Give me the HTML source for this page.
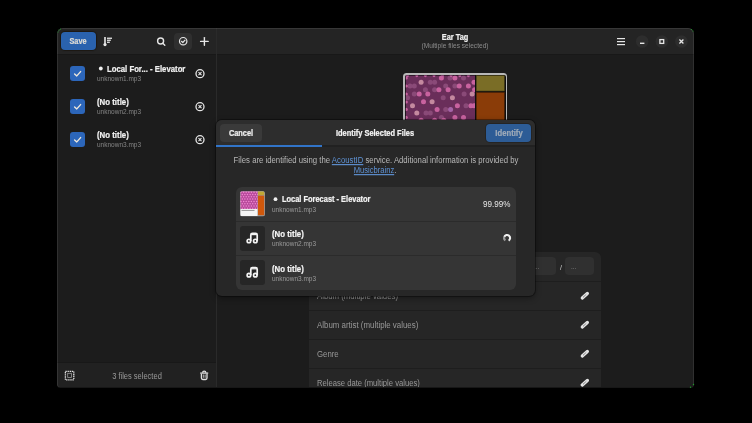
<!DOCTYPE html>
<html><head><meta charset="utf-8">
<style>
*{box-sizing:border-box;margin:0;padding:0}
html,body{width:752px;height:423px;overflow:hidden;background:#000;font-family:"Liberation Sans",sans-serif;color:#fff;position:relative}
.a{position:absolute}
.t{position:absolute;white-space:nowrap;line-height:1;will-change:transform}
.b{font-weight:bold;-webkit-text-stroke:0.2px currentColor}
svg{overflow:visible}
</style></head><body>
<div class="a" style="left:57px;top:28px;width:637px;height:359px;background:#1c1c1c;border-radius:6px 6px 3px 3px;overflow:hidden"><div class="a" style="left:0;top:0;width:637px;height:25.6px;background:#242424"></div><div class="a" style="left:0;top:25.6px;width:637px;height:1px;background:#181818"></div><div class="a" style="left:0;top:334.8px;width:159px;height:25px;background:#212121"></div><div class="a" style="left:0;top:333.8px;width:159px;height:1px;background:#181818"></div><div class="a" style="left:159px;top:0;width:1px;height:359px;background:#2a2a2a"></div></div>
<div class="a" style="left:60.5px;top:32.2px;width:35px;height:18px;background:#2a62ae;border-radius:4px;box-shadow:0 0 1px 1px rgba(20,12,0,0.5)"></div>
<div class="t b" style="left:77.8px;top:38.12px;font-size:7.3px;color:#dedcd6;transform:translateX(-50%) scaleY(1.15);transform-origin:50% 6.18px;">Save</div>
<svg class="a" style="left:0;top:0" width="752" height="423">
<g fill="#e6e6e6">
 <rect x="104.2" y="37" width="1.6" height="7.5"/>
 <circle cx="105" cy="44.6" r="1.6"/>
 <rect x="107" y="37.6" width="5" height="1.3"/>
 <rect x="107" y="39.6" width="3.8" height="1.3"/>
 <rect x="107" y="41.6" width="2.8" height="1.3"/>
</g>
<g stroke="#e6e6e6" stroke-width="1.4" fill="none" stroke-linecap="round">
 <circle cx="160.6" cy="41" r="3"/>
 <line x1="162.8" y1="43.2" x2="164.8" y2="45.2"/>
</g>
</svg>
<div class="a" style="left:174.2px;top:32.6px;width:17.4px;height:17.4px;background:#2f2f2f;border-radius:4px;"></div>
<svg class="a" style="left:0;top:0" width="752" height="423">
<g stroke="#e6e6e6" stroke-width="1.2" fill="none" stroke-linecap="round" stroke-linejoin="round">
 <circle cx="183.2" cy="41.2" r="3.7"/>
 <polyline points="181.5,41.3 182.8,42.5 185,40.2"/>
 <line x1="204.4" y1="37.6" x2="204.4" y2="45.2" stroke-width="1.4"/>
 <line x1="200.6" y1="41.4" x2="208.2" y2="41.4" stroke-width="1.4"/>
</g>
</svg>
<div class="a" style="left:70px;top:65.9px;width:15px;height:15px;background:#2c66ba;border-radius:3px;"></div>
<svg class="a" style="left:0;top:0" width="752" height="423"><polyline points="74.6,73.9 76.8,75.9 80.6,71.6" stroke="#eee8dc" stroke-width="1.4" fill="none" stroke-linecap="round" stroke-linejoin="round"/><circle cx="200" cy="73.7" r="4" stroke="#e6e6e6" stroke-width="1.3" fill="none"/><path d="M198.5 72.2 L201.5 75.2 M201.5 72.2 L198.5 75.2" stroke="#e6e6e6" stroke-width="1.1"/></svg>
<div class="t b" style="left:106.6px;top:65.84px;font-size:7.75px;color:#f0f0f0;transform:scaleY(1.15);transform-origin:50% 6.56px;">Local For... - Elevator</div>
<div class="t" style="left:96.7px;top:76.30px;font-size:6.5px;color:#858585;transform:scaleY(1.15);transform-origin:50% 5.50px;">unknown1.mp3</div>
<div class="a" style="left:70px;top:98.9px;width:15px;height:15px;background:#2c66ba;border-radius:3px;"></div>
<svg class="a" style="left:0;top:0" width="752" height="423"><polyline points="74.6,106.9 76.8,108.9 80.6,104.6" stroke="#eee8dc" stroke-width="1.4" fill="none" stroke-linecap="round" stroke-linejoin="round"/><circle cx="200" cy="106.7" r="4" stroke="#e6e6e6" stroke-width="1.3" fill="none"/><path d="M198.5 105.2 L201.5 108.2 M201.5 105.2 L198.5 108.2" stroke="#e6e6e6" stroke-width="1.1"/></svg>
<div class="t b" style="left:96.7px;top:98.85px;font-size:7.85px;color:#f0f0f0;transform:scaleY(1.15);transform-origin:50% 6.65px;">(No title)</div>
<div class="t" style="left:96.7px;top:109.30px;font-size:6.5px;color:#858585;transform:scaleY(1.15);transform-origin:50% 5.50px;">unknown2.mp3</div>
<div class="a" style="left:70px;top:131.9px;width:15px;height:15px;background:#2c66ba;border-radius:3px;"></div>
<svg class="a" style="left:0;top:0" width="752" height="423"><polyline points="74.6,139.9 76.8,141.9 80.6,137.6" stroke="#eee8dc" stroke-width="1.4" fill="none" stroke-linecap="round" stroke-linejoin="round"/><circle cx="200" cy="139.7" r="4" stroke="#e6e6e6" stroke-width="1.3" fill="none"/><path d="M198.5 138.2 L201.5 141.2 M201.5 138.2 L198.5 141.2" stroke="#e6e6e6" stroke-width="1.1"/></svg>
<div class="t b" style="left:96.7px;top:131.85px;font-size:7.85px;color:#f0f0f0;transform:scaleY(1.15);transform-origin:50% 6.65px;">(No title)</div>
<div class="t" style="left:96.7px;top:142.30px;font-size:6.5px;color:#858585;transform:scaleY(1.15);transform-origin:50% 5.50px;">unknown3.mp3</div>
<svg class="a" style="left:0;top:0" width="752" height="423">
<rect x="65.4" y="371.4" width="8.4" height="8.4" stroke="#e0e0e0" stroke-width="1.3" fill="none" stroke-dasharray="1.4 0.7"/>
<rect x="67.7" y="373.3" width="3.8" height="4.2" fill="none" stroke="#9a9a9a" stroke-width="0.8"/>
<g transform="translate(0,-0.5)"><g stroke="#e0e0e0" stroke-width="1.3" fill="none" stroke-linejoin="round">
 <path d="M201.4 374.2 V378.6 Q201.4 380 202.8 380 H205.6 Q207 380 207 378.6 V374.2"/>
 <line x1="200.2" y1="373.6" x2="208.2" y2="373.6"/>
 <path d="M202.6 373.2 Q202.6 371.6 204.2 371.6 Q205.8 371.6 205.8 373.2"/>
 <line x1="203.3" y1="375" x2="203.3" y2="378.3" stroke-width="0.8"/>
 <line x1="205.1" y1="375" x2="205.1" y2="378.3" stroke-width="0.8"/>
</g>
</g>
</svg>
<div class="t" style="left:136.8px;top:372.55px;font-size:7.5px;color:#9a9a9a;transform:translateX(-50%) scaleY(1.15);transform-origin:50% 6.35px;">3 files selected</div>
<div class="t b" style="left:455px;top:34.24px;font-size:7.4px;color:#f0f0f0;transform:translateX(-50%) scaleY(1.15);transform-origin:50% 6.26px;">Ear Tag</div>
<div class="t" style="left:454.9px;top:43.01px;font-size:6.6px;color:#8c8c8c;transform:translateX(-50%) scaleY(1.15);transform-origin:50% 5.59px;">(Multiple files selected)</div>
<svg class="a" style="left:0;top:0" width="752" height="423">
<g fill="#e6e6e6">
 <rect x="617" y="38" width="8" height="1.2"/>
 <rect x="617" y="41" width="8" height="1.2"/>
 <rect x="617" y="44" width="8" height="1.2"/>
</g>
<circle cx="642.2" cy="41.5" r="6.3" fill="#2d2d2d"/>
<circle cx="661.8" cy="41.5" r="6.3" fill="#2d2d2d"/>
<circle cx="681.4" cy="41.5" r="6.3" fill="#2d2d2d"/>
<rect x="640" y="42.6" width="4.4" height="1.4" fill="#e6e6e6"/>
<rect x="659.9" y="39.6" width="3.8" height="3.8" stroke="#e6e6e6" stroke-width="1.3" fill="none"/>
<path d="M679.4 39.5 L683.4 43.5 M683.4 39.5 L679.4 43.5" stroke="#e6e6e6" stroke-width="1.3"/>
</svg>
<div class="a" style="left:217px;top:54px;width:477px;height:333px;overflow:hidden;border-radius:0 0 3px 0"><div class="a" style="left:-217px;top:-54px;width:752px;height:423px">
<div class="a" style="left:403.2px;top:73.2px;width:104.2px;height:60px;background:#b8b8b8;border-radius:3.5px;"></div>
<div class="a" style="left:405px;top:75px;width:100.6px;height:60px;background:#0e0e0e;border-radius:2px;"></div>
<svg class="a" style="left:0;top:0" width="752" height="423"><defs><clipPath id="pk"><rect x="405.8" y="75.6" width="69.2" height="50"/></clipPath></defs><rect x="405.8" y="75.6" width="69.2" height="50" fill="#6a2e5a"/><g clip-path="url(#pk)"><circle cx="441.4" cy="78.0" r="2.5" fill="#c8629f"/><circle cx="450.0" cy="78.0" r="2.5" fill="#8a4a78"/><circle cx="454.9" cy="78.0" r="2.5" fill="#c8629f"/><circle cx="463.5" cy="78.0" r="2.5" fill="#8a4a78"/><circle cx="421.1" cy="82.3" r="2.5" fill="#c4899f"/><circle cx="430.3" cy="82.3" r="2.5" fill="#8a4a78"/><circle cx="434.6" cy="82.3" r="2.5" fill="#8a4a78"/><circle cx="474.0" cy="82.3" r="2.5" fill="#c8629f"/><circle cx="410.0" cy="86.0" r="2.5" fill="#8a4a78"/><circle cx="414.3" cy="86.0" r="2.5" fill="#8a4a78"/><circle cx="445.7" cy="86.0" r="2.5" fill="#8a4a78"/><circle cx="454.9" cy="86.0" r="2.5" fill="#8a4a78"/><circle cx="459.2" cy="86.0" r="2.5" fill="#c8629f"/><circle cx="468.4" cy="86.0" r="2.5" fill="#c8629f"/><circle cx="425.4" cy="89.7" r="2.5" fill="#8a4a78"/><circle cx="434.6" cy="89.7" r="2.5" fill="#8a4a78"/><circle cx="438.9" cy="89.7" r="2.5" fill="#c8629f"/><circle cx="448.1" cy="89.7" r="2.5" fill="#c8629f"/><circle cx="474.6" cy="89.7" r="2.5" fill="#c8629f"/><circle cx="414.3" cy="94.0" r="2.5" fill="#8a4a78"/><circle cx="419.2" cy="94.0" r="2.5" fill="#c8629f"/><circle cx="427.8" cy="94.0" r="2.5" fill="#c8629f"/><circle cx="464.1" cy="94.0" r="2.5" fill="#8a4a78"/><circle cx="472.1" cy="94.0" r="2.5" fill="#c4899f"/><circle cx="407.5" cy="97.7" r="2.5" fill="#8a4a78"/><circle cx="443.2" cy="97.7" r="2.5" fill="#8a4a78"/><circle cx="452.4" cy="97.7" r="2.5" fill="#c4899f"/><circle cx="423.5" cy="101.7" r="2.5" fill="#c8629f"/><circle cx="432.1" cy="101.7" r="2.5" fill="#c4899f"/><circle cx="412.5" cy="105.7" r="2.5" fill="#c4899f"/><circle cx="457.4" cy="105.7" r="2.5" fill="#c8629f"/><circle cx="466.0" cy="105.7" r="2.5" fill="#8a4a78"/><circle cx="470.9" cy="105.7" r="2.5" fill="#c8629f"/><circle cx="474.0" cy="105.7" r="2.5" fill="#c8629f"/><circle cx="437.1" cy="109.4" r="2.5" fill="#c8629f"/><circle cx="445.7" cy="109.4" r="2.5" fill="#8a4a78"/><circle cx="450.6" cy="109.4" r="2.5" fill="#a664a8"/><circle cx="416.8" cy="113.1" r="2.5" fill="#c4899f"/><circle cx="426.0" cy="113.1" r="2.5" fill="#8a4a78"/><circle cx="430.3" cy="113.1" r="2.5" fill="#8a4a78"/><circle cx="441.4" cy="117.4" r="2.5" fill="#8a4a78"/><circle cx="454.9" cy="117.4" r="2.5" fill="#c8629f"/><circle cx="463.5" cy="117.4" r="2.5" fill="#c8629f"/><circle cx="421.1" cy="120.2" r="2.5" fill="#c8629f"/><circle cx="434.6" cy="120.2" r="2.5" fill="#c8629f"/><circle cx="443.8" cy="120.2" r="2.5" fill="#c8629f"/><circle cx="406.2" cy="78.0" r="1.6" fill="#c8629f"/><circle cx="406.2" cy="86.0" r="1.6" fill="#c8629f"/><circle cx="406.2" cy="94.0" r="1.6" fill="#c8629f"/><circle cx="406.2" cy="102.0" r="1.6" fill="#c8629f"/><circle cx="406.2" cy="109.4" r="1.6" fill="#c8629f"/><circle cx="406.2" cy="117.4" r="1.6" fill="#c8629f"/><circle cx="407.5" cy="75.8" r="1.4" fill="#c060a0"/><circle cx="416.8" cy="75.8" r="1.4" fill="#c060a0"/><circle cx="425.4" cy="75.8" r="1.4" fill="#c060a0"/><circle cx="434.0" cy="75.8" r="1.4" fill="#c060a0"/><circle cx="442.6" cy="75.8" r="1.4" fill="#c060a0"/><circle cx="451.2" cy="75.8" r="1.4" fill="#c060a0"/><circle cx="459.8" cy="75.8" r="1.4" fill="#c060a0"/><circle cx="468.4" cy="75.8" r="1.4" fill="#c060a0"/></g><rect x="476.3" y="75.7" width="28" height="15.3" fill="#7a6d26" stroke="#4a4218" stroke-width="0.6"/><rect x="476.3" y="92.5" width="28" height="40" fill="#8a3c08" stroke="#502405" stroke-width="0.6"/></svg>
<div class="a" style="left:309px;top:252px;width:292px;height:140px;background:#262626;border-radius:6px"></div>
<div class="a" style="left:309px;top:281px;width:292px;height:1px;background:#1e1e1e;border-radius:0;"></div>
<div class="a" style="left:309px;top:310px;width:292px;height:1px;background:#1e1e1e;border-radius:0;"></div>
<div class="a" style="left:309px;top:339px;width:292px;height:1px;background:#1e1e1e;border-radius:0;"></div>
<div class="a" style="left:309px;top:368px;width:292px;height:1px;background:#1e1e1e;border-radius:0;"></div>
<div class="a" style="left:520px;top:257.4px;width:36px;height:18px;background:#303030;border-radius:4px;"></div>
<div class="a" style="left:565.4px;top:257.4px;width:28.5px;height:18px;background:#303030;border-radius:4px;"></div>
<div class="t" style="left:560.7px;top:263.57px;font-size:7px;color:#cfcfcf;transform:translateX(-50%) scaleY(1.15);transform-origin:50% 5.93px;">/</div>
<div class="t" style="left:570.5px;top:264.00px;font-size:6.5px;color:#8a8a8a;transform:scaleY(1.15);transform-origin:50% 5.50px;">...</div>
<div class="t" style="left:533.5px;top:264.00px;font-size:6.5px;color:#8a8a8a;transform:scaleY(1.15);transform-origin:50% 5.50px;">...</div>
<div class="t" style="left:316.5px;top:292.80px;font-size:7.8px;color:#989898;transform:scaleY(1.15);transform-origin:50% 6.60px;">Album (multiple values)</div>
<svg class="a" style="left:0;top:0" width="752" height="423"><g transform="translate(584.8,295.7) rotate(-42)"><line x1="-3.4" y1="0" x2="3.4" y2="0" stroke="#e4e4e4" stroke-width="3.3" stroke-linecap="round"/><line x1="-2" y1="0" x2="2" y2="0" stroke="#3a3a3a" stroke-width="0.9" stroke-dasharray="0.8 0.7"/></g></svg>
<div class="t" style="left:316.5px;top:321.71px;font-size:7.9px;color:#989898;transform:scaleY(1.15);transform-origin:50% 6.69px;">Album artist (multiple values)</div>
<svg class="a" style="left:0;top:0" width="752" height="423"><g transform="translate(584.8,324.7) rotate(-42)"><line x1="-3.4" y1="0" x2="3.4" y2="0" stroke="#e4e4e4" stroke-width="3.3" stroke-linecap="round"/><line x1="-2" y1="0" x2="2" y2="0" stroke="#3a3a3a" stroke-width="0.9" stroke-dasharray="0.8 0.7"/></g></svg>
<div class="t" style="left:316.5px;top:350.80px;font-size:7.8px;color:#989898;transform:scaleY(1.15);transform-origin:50% 6.60px;">Genre</div>
<svg class="a" style="left:0;top:0" width="752" height="423"><g transform="translate(584.8,353.7) rotate(-42)"><line x1="-3.4" y1="0" x2="3.4" y2="0" stroke="#e4e4e4" stroke-width="3.3" stroke-linecap="round"/><line x1="-2" y1="0" x2="2" y2="0" stroke="#3a3a3a" stroke-width="0.9" stroke-dasharray="0.8 0.7"/></g></svg>
<div class="t" style="left:316.5px;top:379.92px;font-size:7.65px;color:#989898;transform:scaleY(1.15);transform-origin:50% 6.48px;">Release date (multiple values)</div>
<svg class="a" style="left:0;top:0" width="752" height="423"><g transform="translate(584.8,382.7) rotate(-42)"><line x1="-3.4" y1="0" x2="3.4" y2="0" stroke="#e4e4e4" stroke-width="3.3" stroke-linecap="round"/><line x1="-2" y1="0" x2="2" y2="0" stroke="#3a3a3a" stroke-width="0.9" stroke-dasharray="0.8 0.7"/></g></svg>
</div></div>
<div class="a" style="left:216px;top:120px;width:318.6px;height:175.5px;background:#272727;border-radius:6px;box-shadow:0 0 0 1px rgba(0,0,0,0.35),0 2px 6px rgba(0,0,0,0.4);overflow:hidden"><div class="a" style="left:0;top:0;width:100%;height:25px;background:#2d2d2d"></div><div class="a" style="left:0;top:25px;width:100%;height:2px;background:#212121"></div><div class="a" style="left:0;top:25px;width:106.4px;height:2px;background:#3174c8"></div></div>
<div class="a" style="left:219.6px;top:124.1px;width:42.6px;height:17.9px;background:#3a3a3a;border-radius:4px;"></div>
<div class="t b" style="left:240.9px;top:129.94px;font-size:7.4px;color:#f0f0f0;transform:translateX(-50%) scaleY(1.15);transform-origin:50% 6.26px;">Cancel</div>
<div class="t b" style="left:375.3px;top:130.29px;font-size:7.45px;color:#f4f4f4;transform:translateX(-50%) scaleY(1.15);transform-origin:50% 6.31px;">Identify Selected Files</div>
<div class="a" style="left:486px;top:123.8px;width:45.3px;height:18px;background:#2d5c96;border-radius:4px;box-shadow:0 0 0 1px rgba(0,0,0,0.2)"></div>
<div class="t b" style="left:508.6px;top:129.68px;font-size:7.7px;color:#9eaab8;transform:translateX(-50%) scaleY(1.15);transform-origin:50% 6.52px;">Identify</div>
<div class="t" style="left:375.6px;top:157.14px;font-size:7.75px;color:#b8b8b8;transform:translateX(-50%) scaleY(1.15);transform-origin:50% 6.56px;">Files are identified using the <span style="color:#5f93d6;text-decoration:underline">AcoustID</span> service. Additional information is provided by</div>
<div class="t" style="left:375.1px;top:166.87px;font-size:7.6px;color:#b8b8b8;transform:translateX(-50%) scaleY(1.15);transform-origin:50% 6.43px;"><span style="color:#5f93d6;text-decoration:underline">Musicbrainz</span>.</div>
<div class="a" style="left:235.6px;top:187px;width:280.4px;height:102.6px;background:#353535;border-radius:6px;"></div>
<div class="a" style="left:235.6px;top:221px;width:280.4px;height:1px;background:#2b2b2b;border-radius:0;"></div>
<div class="a" style="left:235.6px;top:255.3px;width:280.4px;height:1px;background:#2b2b2b;border-radius:0;"></div>
<svg class="a" style="left:0;top:0" width="752" height="423"><defs><clipPath id="th"><rect x="240" y="191" width="25" height="25.5" rx="2.5"/></clipPath></defs><g clip-path="url(#th)"><rect x="240" y="191" width="25" height="25.5" fill="#9a9a9a"/><rect x="240.6" y="191.5" width="16.9" height="17.4" fill="#b84a9c"/><circle cx="241.0" cy="192.2" r="0.75" fill="#f088d0"/><circle cx="243.6" cy="192.2" r="0.75" fill="#f088d0"/><circle cx="246.2" cy="192.2" r="0.75" fill="#f088d0"/><circle cx="248.8" cy="192.2" r="0.75" fill="#f088d0"/><circle cx="251.4" cy="192.2" r="0.75" fill="#f088d0"/><circle cx="254.0" cy="192.2" r="0.75" fill="#f088d0"/><circle cx="256.6" cy="192.2" r="0.75" fill="#f088d0"/><circle cx="242.3" cy="194.5" r="0.75" fill="#f088d0"/><circle cx="244.9" cy="194.5" r="0.75" fill="#f088d0"/><circle cx="247.5" cy="194.5" r="0.75" fill="#f088d0"/><circle cx="250.1" cy="194.5" r="0.75" fill="#f088d0"/><circle cx="252.7" cy="194.5" r="0.75" fill="#f088d0"/><circle cx="255.3" cy="194.5" r="0.75" fill="#f088d0"/><circle cx="257.9" cy="194.5" r="0.75" fill="#f088d0"/><circle cx="241.0" cy="196.8" r="0.75" fill="#f088d0"/><circle cx="243.6" cy="196.8" r="0.75" fill="#f088d0"/><circle cx="246.2" cy="196.8" r="0.75" fill="#f088d0"/><circle cx="248.8" cy="196.8" r="0.75" fill="#f088d0"/><circle cx="251.4" cy="196.8" r="0.75" fill="#f088d0"/><circle cx="254.0" cy="196.8" r="0.75" fill="#f088d0"/><circle cx="256.6" cy="196.8" r="0.75" fill="#f088d0"/><circle cx="242.3" cy="199.1" r="0.75" fill="#f088d0"/><circle cx="244.9" cy="199.1" r="0.75" fill="#f088d0"/><circle cx="247.5" cy="199.1" r="0.75" fill="#f088d0"/><circle cx="250.1" cy="199.1" r="0.75" fill="#f088d0"/><circle cx="252.7" cy="199.1" r="0.75" fill="#f088d0"/><circle cx="255.3" cy="199.1" r="0.75" fill="#f088d0"/><circle cx="257.9" cy="199.1" r="0.75" fill="#f088d0"/><circle cx="241.0" cy="201.4" r="0.75" fill="#f088d0"/><circle cx="243.6" cy="201.4" r="0.75" fill="#f088d0"/><circle cx="246.2" cy="201.4" r="0.75" fill="#f088d0"/><circle cx="248.8" cy="201.4" r="0.75" fill="#f088d0"/><circle cx="251.4" cy="201.4" r="0.75" fill="#f088d0"/><circle cx="254.0" cy="201.4" r="0.75" fill="#f088d0"/><circle cx="256.6" cy="201.4" r="0.75" fill="#f088d0"/><circle cx="242.3" cy="203.7" r="0.75" fill="#f088d0"/><circle cx="244.9" cy="203.7" r="0.75" fill="#f088d0"/><circle cx="247.5" cy="203.7" r="0.75" fill="#f088d0"/><circle cx="250.1" cy="203.7" r="0.75" fill="#f088d0"/><circle cx="252.7" cy="203.7" r="0.75" fill="#f088d0"/><circle cx="255.3" cy="203.7" r="0.75" fill="#f088d0"/><circle cx="257.9" cy="203.7" r="0.75" fill="#f088d0"/><circle cx="241.0" cy="206.0" r="0.75" fill="#f088d0"/><circle cx="243.6" cy="206.0" r="0.75" fill="#f088d0"/><circle cx="246.2" cy="206.0" r="0.75" fill="#f088d0"/><circle cx="248.8" cy="206.0" r="0.75" fill="#f088d0"/><circle cx="251.4" cy="206.0" r="0.75" fill="#f088d0"/><circle cx="254.0" cy="206.0" r="0.75" fill="#f088d0"/><circle cx="256.6" cy="206.0" r="0.75" fill="#f088d0"/><circle cx="242.3" cy="208.3" r="0.75" fill="#f088d0"/><circle cx="244.9" cy="208.3" r="0.75" fill="#f088d0"/><circle cx="247.5" cy="208.3" r="0.75" fill="#f088d0"/><circle cx="250.1" cy="208.3" r="0.75" fill="#f088d0"/><circle cx="252.7" cy="208.3" r="0.75" fill="#f088d0"/><circle cx="255.3" cy="208.3" r="0.75" fill="#f088d0"/><circle cx="257.9" cy="208.3" r="0.75" fill="#f088d0"/><rect x="258" y="191.5" width="6.2" height="3.6" fill="#c0a834"/><rect x="258" y="195.6" width="6.2" height="19.6" fill="#d0580c"/><rect x="240.6" y="209" width="16.9" height="7" fill="#f4f4f4"/><rect x="241.5" y="209.9" width="13" height="0.9" fill="#888"/></g></svg>
<div class="a" style="left:239.9px;top:225.8px;width:25.1px;height:25.1px;background:#262626;border-radius:3px;"></div>
<div class="a" style="left:239.9px;top:260.1px;width:25.1px;height:25.4px;background:#262626;border-radius:3px;"></div>
<svg class="a" style="left:0;top:0" width="752" height="423">
<g stroke="#f4f4f4" stroke-width="1.7" fill="none" stroke-linejoin="round">
 <path d="M250.8 241 V235 Q250.8 233.4 252.4 233.4 H255.6 Q257.2 233.4 257.2 235 V241"/>
 <line x1="251" y1="234.6" x2="257" y2="234.6" stroke-width="1.2"/>
 <circle cx="248.9" cy="241" r="1.75"/>
 <circle cx="255.3" cy="241" r="1.75"/>
</g>
<g stroke="#f4f4f4" stroke-width="1.7" fill="none" stroke-linejoin="round">
 <path d="M250.8 275.2 V269.2 Q250.8 267.6 252.4 267.6 H255.6 Q257.2 267.6 257.2 269.2 V275.2"/>
 <line x1="251" y1="268.8" x2="257" y2="268.8" stroke-width="1.2"/>
 <circle cx="248.9" cy="275.2" r="1.75"/>
 <circle cx="255.3" cy="275.2" r="1.75"/>
</g>
<path d="M508.60 240.60 A3.0 3.0 0 1 0 504.28 236.97" stroke="#f0f0f0" stroke-width="2.1" fill="none"/><path d="M504.28 236.97 A3.0 3.0 0 0 0 505.38 240.46" stroke="#9a9a9a" stroke-width="2.1" fill="none"/>
</svg>
<svg class="a" style="left:0;top:0" width="752" height="423"><circle cx="275.5" cy="199.2" r="1.9" fill="#f0f0f0"/><circle cx="100.8" cy="68.5" r="1.9" fill="#f0f0f0"/></svg>
<div class="t b" style="left:281.7px;top:196.09px;font-size:7.45px;color:#f4f4f4;transform:scaleY(1.15);transform-origin:50% 6.31px;">Local Forecast - Elevator</div>
<div class="t" style="left:271.8px;top:206.70px;font-size:6.5px;color:#9a9a9a;transform:scaleY(1.15);transform-origin:50% 5.50px;">unknown1.mp3</div>
<div class="t" style="right:241.10000000000002px;top:200.64px;font-size:8.1px;color:#e6e6e6;transform:scaleY(1.15);transform-origin:50% 6.86px;">99.99%</div>
<div class="t b" style="left:271.8px;top:231.25px;font-size:7.85px;color:#f4f4f4;transform:scaleY(1.15);transform-origin:50% 6.65px;">(No title)</div>
<div class="t" style="left:271.8px;top:241.40px;font-size:6.5px;color:#9a9a9a;transform:scaleY(1.15);transform-origin:50% 5.50px;">unknown2.mp3</div>
<div class="t b" style="left:271.8px;top:265.55px;font-size:7.85px;color:#f4f4f4;transform:scaleY(1.15);transform-origin:50% 6.65px;">(No title)</div>
<div class="t" style="left:271.8px;top:275.60px;font-size:6.5px;color:#9a9a9a;transform:scaleY(1.15);transform-origin:50% 5.50px;">unknown3.mp3</div>
<div class="a" style="left:57px;top:28px;width:637px;height:359.5px;border-radius:6px 6px 3.5px 3.5px;box-shadow:inset 0 0 0 1px rgba(255,255,255,0.09)"></div>
<svg class="a" style="left:0;top:0" width="752" height="423"><g fill="#1f9a2a"><circle cx="693.5" cy="384.5" r="0.7"/><circle cx="690.5" cy="387.3" r="0.7"/><circle cx="59" cy="30" r="0.6"/><circle cx="60.5" cy="29" r="0.6"/><circle cx="58" cy="32" r="0.5"/><circle cx="691.5" cy="29.5" r="0.6"/><circle cx="693" cy="31" r="0.6"/></g></svg>
</body></html>
